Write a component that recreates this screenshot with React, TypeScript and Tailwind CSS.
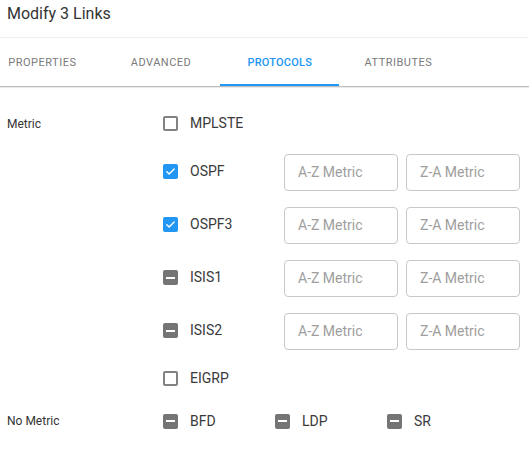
import React from "react";

type CheckState = "off" | "on" | "mixed";

function Box({ state }: { state: CheckState }) {
  if (state === "on") {
    return (
      <span className="flex h-[15px] w-[15px] shrink-0 items-center justify-center rounded-[2px] bg-[#2196f3]">
        <svg width="11" height="11" viewBox="0 0 24 24" fill="none">
          <path d="M4 12.5l5 5L20 6.5" stroke="#fff" strokeWidth="3" strokeLinecap="round" strokeLinejoin="round" />
        </svg>
      </span>
    );
  }
  if (state === "mixed") {
    return (
      <span className="flex h-[15px] w-[15px] shrink-0 items-center justify-center rounded-[2px] bg-[#757575]">
        <span className="h-[2px] w-[9px] bg-white" />
      </span>
    );
  }
  return <span className="h-[15px] w-[15px] shrink-0 rounded-[2px] border-2 border-[#838383] bg-white" />;
}

function Check({ state, label, width = "w-[121px]" }: { state: CheckState; label: string; width?: string }) {
  return (
    <div className={`flex items-center gap-3 ${width}`}>
      <Box state={state} />
      <span className="text-[14px] text-[#3a3a3a]">{label}</span>
    </div>
  );
}

function MetricInput({ placeholder }: { placeholder: string }) {
  return (
    <div className="flex h-[37px] w-[114px] items-center rounded-[4px] border border-[#c8c8c8] px-[13px] text-[14px] text-[#9e9e9e]">
      {placeholder}
    </div>
  );
}

const rows: { label: string; state: CheckState; inputs: boolean; top: string; h: string }[] = [
  { label: "MPLSTE", state: "off", inputs: false, top: "mt-0", h: "h-[30px]" },
  { label: "OSPF", state: "on", inputs: true, top: "mt-[15px]", h: "h-[37px]" },
  { label: "OSPF3", state: "on", inputs: true, top: "mt-[16px]", h: "h-[37px]" },
  { label: "ISIS1", state: "mixed", inputs: true, top: "mt-[16px]", h: "h-[37px]" },
  { label: "ISIS2", state: "mixed", inputs: true, top: "mt-[16px]", h: "h-[37px]" },
  { label: "EIGRP", state: "off", inputs: false, top: "mt-[14px]", h: "h-[30px]" },
];

const tabs = ["PROPERTIES", "ADVANCED", "PROTOCOLS", "ATTRIBUTES"];

export default function App() {
  return (
    <div className="h-[465px] w-[529px] overflow-hidden bg-white font-['Roboto',sans-serif]">
      <div className="h-[38px] border-b border-[#f0f0f0] px-[7px] pt-[3px] text-[16px] leading-[22px] text-[#333]">
        Modify 3 Links
      </div>
      <div className="flex h-[49px] overflow-hidden border-b border-[#bdbdbd] shadow-[0_1px_1px_rgba(0,0,0,0.08)]">
        <div className="ml-[-17px] flex">
          {tabs.map((t) => {
            const active = t === "PROTOCOLS";
            return (
              <div
                key={t}
                className={`flex h-full w-[118.7px] items-center justify-center border-b-2 pt-[4px] text-[11px] ${
                  active
                    ? "border-[#2196f3] font-medium tracking-[0.2px] text-[#2196f3]"
                    : "border-transparent tracking-[0.5px] text-[#7a7a7a]"
                }`}
              >
                {t}
              </div>
            );
          })}
        </div>
      </div>

      <div className="mt-[22px] flex">
        <div className="w-[163px] pl-[7px]">
          <div className="flex h-[30px] items-center text-[12px] text-[#333]">Metric</div>
        </div>
        <div className="flex flex-col">
          {rows.map((r) => (
            <div key={r.label} className={`flex items-center ${r.top} ${r.h}`}>
              <div className="-mt-[2px]">
                <Check state={r.state} label={r.label} />
              </div>
              {r.inputs && (
                <div className="flex gap-2">
                  <MetricInput placeholder="A-Z Metric" />
                  <MetricInput placeholder="Z-A Metric" />
                </div>
              )}
            </div>
          ))}
        </div>
      </div>

      <div className="mt-[12px] flex h-[30px] items-center">
        <div className="w-[163px] pl-[7px] text-[12px] text-[#333]">No Metric</div>
        <Check state="mixed" label="BFD" width="w-[112px]" />
        <Check state="mixed" label="LDP" width="w-[112px]" />
        <Check state="mixed" label="SR" width="w-[112px]" />
      </div>
    </div>
  );
}
